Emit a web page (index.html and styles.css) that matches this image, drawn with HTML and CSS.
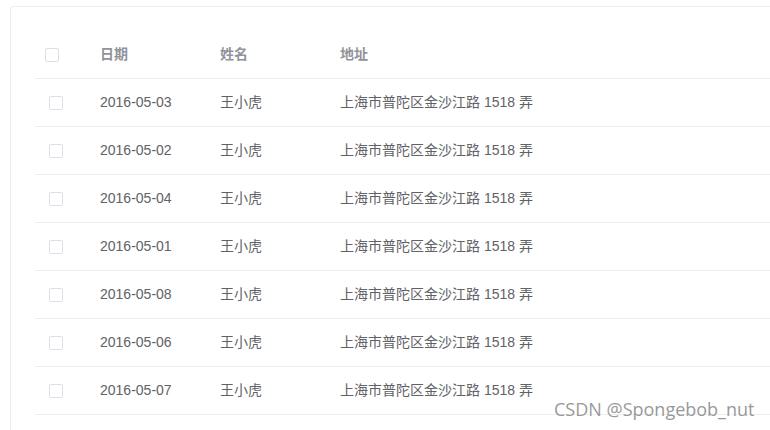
FILE: index.html
```html
<!DOCTYPE html>
<html lang="zh-CN">
<head>
<meta charset="utf-8">
<link rel="stylesheet" href="styles.css">
</head>
<body>
<div class="card">
  <table class="table">
    <colgroup>
      <col class="c-sel"><col class="c-date"><col class="c-name"><col class="c-addr">
    </colgroup>
    <thead>
      <tr>
        <th class="sel head-sel"><span class="checkbox"></span></th>
        <th>日期</th>
        <th>姓名</th>
        <th>地址</th>
      </tr>
    </thead>
    <tbody>
      <tr><td class="sel"><span class="checkbox"></span></td><td>2016-05-03</td><td>王小虎</td><td>上海市普陀区金沙江路 1518 弄</td></tr>
      <tr><td class="sel"><span class="checkbox"></span></td><td>2016-05-02</td><td>王小虎</td><td>上海市普陀区金沙江路 1518 弄</td></tr>
      <tr><td class="sel"><span class="checkbox"></span></td><td>2016-05-04</td><td>王小虎</td><td>上海市普陀区金沙江路 1518 弄</td></tr>
      <tr><td class="sel"><span class="checkbox"></span></td><td>2016-05-01</td><td>王小虎</td><td>上海市普陀区金沙江路 1518 弄</td></tr>
      <tr><td class="sel"><span class="checkbox"></span></td><td>2016-05-08</td><td>王小虎</td><td>上海市普陀区金沙江路 1518 弄</td></tr>
      <tr><td class="sel"><span class="checkbox"></span></td><td>2016-05-06</td><td>王小虎</td><td>上海市普陀区金沙江路 1518 弄</td></tr>
      <tr><td class="sel"><span class="checkbox"></span></td><td>2016-05-07</td><td>王小虎</td><td>上海市普陀区金沙江路 1518 弄</td></tr>
    </tbody>
  </table>
</div>
<div class="watermark">CSDN @Spongebob_nut</div>
</body>
</html>
```
FILE: styles.css
```css
html, body {
  margin: 0;
  padding: 0;
  background: #fff;
  overflow: hidden;
  width: 770px;
  height: 430px;
}
body {
  font-family: "Liberation Sans", Arial, "Noto Sans CJK SC", sans-serif;
  font-size: 14px;
  color: #606266;
  position: relative;
}
.card {
  margin: 6px 0 0 10px;
  width: 760px;
  height: 424px;
  border: 1px solid #ebeef5;
  border-right: 0;
  border-bottom: 0;
  border-radius: 4px 0 0 0;
  padding: 24px 0 0 24px;
  box-sizing: border-box;
  overflow: hidden;
}
.table {
  border-collapse: collapse;
  table-layout: fixed;
  width: 735px;
}
.c-sel { width: 55px; }
.c-date { width: 120px; }
.c-name { width: 120px; }
.table th, .table td {
  height: 47px;
  padding: 0 10px;
  text-align: left;
  vertical-align: middle;
  border-bottom: 1px solid #ebeef5;
  line-height: 23px;
  white-space: nowrap;
}
.table th {
  color: #909399;
  font-weight: bold;
}
.table td.sel { padding-left: 14px; }
.table th.head-sel { padding-left: 10px; }
.checkbox {
  display: block;
  width: 14px;
  height: 14px;
  box-sizing: border-box;
  border: 1px solid #dcdfe6;
  border-radius: 2px;
  background: #fff;
}
.watermark {
  position: absolute;
  left: 554px;
  top: 397px;
  font-family: "Open Sans", sans-serif;
  font-size: 18px;
  color: #999;
  text-shadow: 0 0 1px #fff;
}
```
